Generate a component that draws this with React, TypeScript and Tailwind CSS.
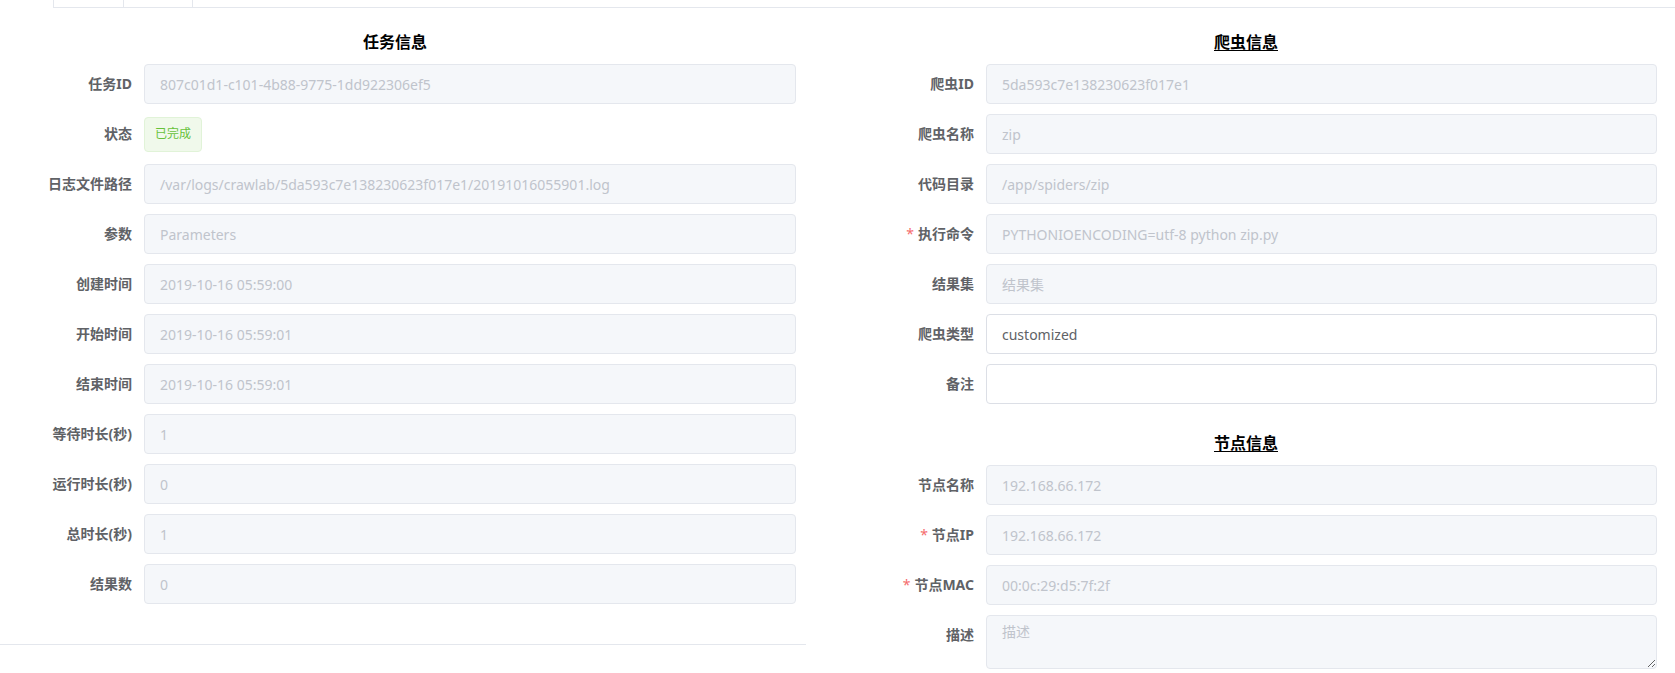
import React from "react";

type Field = {
  label: string;
  value?: string;
  placeholder?: string;
  required?: boolean;
  editable?: boolean;
};

const taskFields: Field[] = [
  { label: "任务ID", value: "807c01d1-c101-4b88-9775-1dd922306ef5" },
  { label: "状态" },
  { label: "日志文件路径", value: "/var/logs/crawlab/5da593c7e138230623f017e1/20191016055901.log" },
  { label: "参数", placeholder: "Parameters" },
  { label: "创建时间", value: "2019-10-16 05:59:00" },
  { label: "开始时间", value: "2019-10-16 05:59:01" },
  { label: "结束时间", value: "2019-10-16 05:59:01" },
  { label: "等待时长(秒)", value: "1" },
  { label: "运行时长(秒)", value: "0" },
  { label: "总时长(秒)", value: "1" },
  { label: "结果数", value: "0" },
];

const spiderFields: Field[] = [
  { label: "爬虫ID", value: "5da593c7e138230623f017e1" },
  { label: "爬虫名称", value: "zip" },
  { label: "代码目录", value: "/app/spiders/zip" },
  { label: "执行命令", value: "PYTHONIOENCODING=utf-8 python zip.py", required: true },
  { label: "结果集", placeholder: "结果集" },
  { label: "爬虫类型", value: "customized", editable: true },
  { label: "备注", value: "", editable: true },
];

const nodeFields: Field[] = [
  { label: "节点名称", value: "192.168.66.172" },
  { label: "节点IP", value: "192.168.66.172", required: true },
  { label: "节点MAC", value: "00:0c:29:d5:7f:2f", required: true },
];

function Label({ f, width }: { f: Field; width: string }) {
  return (
    <div
      className={`${width} flex-shrink-0 pr-3 text-right text-[14px] leading-[40px] font-bold text-[#606266] whitespace-nowrap`}
    >
      {f.required && <span className="text-[#f56c6c] font-normal mr-1">*</span>}
      {f.label}
    </div>
  );
}

function Box({ f }: { f: Field }) {
  const base = "flex-1 min-w-0 h-10 rounded px-[15px] flex items-center text-[14px] whitespace-nowrap overflow-hidden border";
  if (f.editable) {
    return (
      <div className={`${base} bg-white border-[#dcdfe6] text-[#606266]`}>{f.value}</div>
    );
  }
  return (
    <div className={`${base} bg-[#f5f7fa] border-[#e4e7ed] text-[#c0c4cc]`}>
      {f.value ?? f.placeholder}
    </div>
  );
}

function Row({ f, labelWidth }: { f: Field; labelWidth: string }) {
  return (
    <div className="flex mb-[10px]">
      <Label f={f} width={labelWidth} />
      {f.label === "状态" ? (
        <div className="flex-1 h-10 flex items-center">
          <span className="h-[35px] px-[10px] inline-flex items-center rounded border border-[#e1f3d8] bg-[#f0f9eb] text-[12px] text-[#67c23a]">
            已完成
          </span>
        </div>
      ) : (
        <Box f={f} />
      )}
    </div>
  );
}

export default function App() {
  return (
    <div
      className="w-[1675px] h-[673px] bg-white overflow-hidden"
      style={{ fontFamily: '"Noto Sans", "Noto Sans CJK SC", sans-serif' }}
    >
      {/* tab strip, cut off at the top */}
      <div className="flex h-[8px] ml-[53px] border-b border-[#e4e7ed]">
        <div className="w-[70px] border-l border-[#e4e7ed]" />
        <div className="w-[70px] border-x border-[#e4e7ed]" />
      </div>

      <div className="flex items-start">
        {/* task info */}
        <div className="w-[806px] flex-shrink-0 border-b border-[#e4e7ed] pr-[10px] pb-[30px]">
          <div className="w-[790px] mt-[22px] mb-[10px] text-center text-[16px] leading-[24px] font-bold text-black">
            任务信息
          </div>
          {taskFields.map((f) => (
            <Row key={f.label} f={f} labelWidth="w-[144px]" />
          ))}
        </div>

        {/* spider + node info */}
        <div className="flex-1 min-w-0 pr-[18px]">
          <div className="mt-[22px] mb-[10px] pl-[29px] text-center text-[16px] leading-[24px] font-bold text-black">
            <span className="underline underline-offset-2">爬虫信息</span>
          </div>
          {spiderFields.map((f) => (
            <Row key={f.label} f={f} labelWidth="w-[180px]" />
          ))}
          <div className="mt-[27px] mb-[10px] pl-[29px] text-center text-[16px] leading-[24px] font-bold text-black">
            <span className="underline underline-offset-2">节点信息</span>
          </div>
          {nodeFields.map((f) => (
            <Row key={f.label} f={f} labelWidth="w-[180px]" />
          ))}
          <div className="flex">
            <Label f={{ label: "描述" }} width="w-[180px]" />
            <textarea
              readOnly
              placeholder="描述"
              className="flex-1 min-w-0 h-[54px] rounded border border-[#e4e7ed] bg-[#f5f7fa] px-[15px] py-[5px] text-[14px] leading-[1.5] text-[#c0c4cc] placeholder:text-[#c0c4cc] outline-none resize-y"
            />
          </div>
        </div>
      </div>
    </div>
  );
}
